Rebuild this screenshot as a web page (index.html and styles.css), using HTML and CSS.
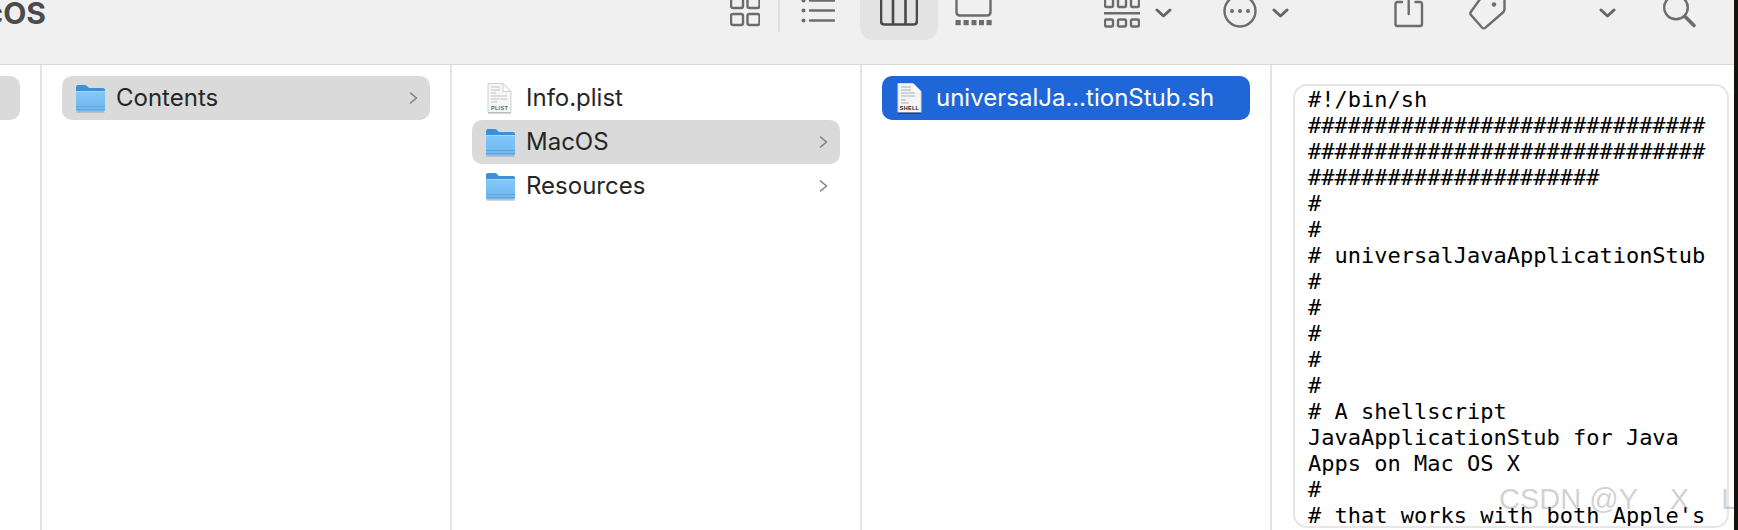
FILE: index.html
```html
<!DOCTYPE html>
<html lang="en">
<head>
<meta charset="utf-8">
<title>MacOS</title>
<link rel="stylesheet" href="styles.css">
</head>
<body>
<svg class="defs" width="0" height="0" aria-hidden="true">
  <defs>
    <linearGradient id="fb" x1="0" y1="0" x2="0" y2="1"><stop offset="0" stop-color="#84c8f8"/><stop offset="1" stop-color="#6db6ee"/></linearGradient>
    <symbol id="folder" viewBox="0 0 29 28">
      <path d="M0 6V2q0-2 2-2h7q1.500 0 2.500 1.500L13 3h14q2 0 2 2v5H0z" fill="#3d8fd8"/>
      <rect x="0" y="6" width="29" height="20.500" rx="1.500" fill="url(#fb)"/>
      <rect x="0" y="6" width="29" height="1" fill="#a4d8fb"/>
      <rect x="0" y="21" width="29" height="1" fill="#5ea6de"/>
      <rect x="0" y="24" width="29" height="1" fill="#5ea6de"/>
      <rect x="0.500" y="26.500" width="28" height="1.200" fill="#9a9a9a" opacity=".6"/>
    </symbol>
    <symbol id="chev" viewBox="0 0 9 12">
      <path d="M1.500 1l6 5-6 5" fill="none" stroke="#7c7c7c" stroke-width="1.500" stroke-linecap="round" stroke-linejoin="round"/>
    </symbol>
    <symbol id="drop" viewBox="0 0 17 10">
      <path d="M2 2l6.500 6L15 2" fill="none" stroke="#666" stroke-width="3" stroke-linecap="round" stroke-linejoin="round"/>
    </symbol>
  </defs>
</svg>
<div class="screen">
  <div class="window">
    <header class="toolbar">
      <div class="title"><span>MacOS</span></div>
      <svg class="tool t-grid" width="30" height="40" viewBox="0 0 30 40"><g class="ico"><rect x="1" y="-4" width="12" height="12" rx="2"/><rect x="17.500" y="-4" width="12" height="12" rx="2"/><rect x="1" y="14" width="12" height="11" rx="2"/><rect x="17.500" y="14" width="12" height="11" rx="2"/></g></svg>
      <div class="tool-sep"></div>
      <svg class="tool t-list" width="34" height="40" viewBox="0 0 34 40"><g class="ico"><path d="M9 .5h24M9 10.500h24M9 20.500h24" stroke-linecap="round"/></g><circle cx="2.500" cy=".5" r="2" class="dot"/><circle cx="2.500" cy="10.500" r="2" class="dot"/><circle cx="2.500" cy="20.500" r="2" class="dot"/></svg>
      <div class="pressed">
        <svg width="38" height="40" viewBox="0 0 38 40"><g class="ico dark"><path d="M1 -4V21q0 3.500 3.500 3.500h29q3.500 0 3.500-3.500V-4M13 -4V24.500M25.500 -4V24.500"/></g></svg>
      </div>
      <svg class="tool t-gallery" width="38" height="40" viewBox="0 0 38 40"><g class="ico"><path d="M1.500 -4V12q0 3.500 3.500 3.500h27q3.500 0 3.500-3.500V-4"/></g><g class="dot"><rect x="0.500" y="20" width="5.200" height="5.200"/><rect x="8.500" y="20" width="5.200" height="5.200"/><rect x="16.500" y="20" width="5" height="5.200"/><rect x="24" y="20" width="5" height="5.200"/><rect x="31.500" y="20" width="5.200" height="5.200"/></g></svg>
      <svg class="tool t-group" width="36" height="40" viewBox="0 0 36 40"><g class="ico"><path d="M0 13.300h36"/><rect x="1" y="-3" width="8" height="10" rx="1.500"/><rect x="14" y="-3" width="8" height="10" rx="1.500"/><rect x="27" y="-3" width="8" height="10" rx="1.500"/><rect x="1" y="19.500" width="8" height="7" rx="1.500"/><rect x="14" y="19.500" width="8" height="7" rx="1.500"/><rect x="27" y="19.500" width="8" height="7" rx="1.500"/></g></svg>
      <svg class="drop d1" width="17" height="10"><use href="#drop"/></svg>
      <svg class="tool t-more" width="34" height="40" viewBox="0 0 34 40"><circle class="ico" cx="17" cy="11" r="15.500"/><circle class="dot" cx="9" cy="11" r="2"/><circle class="dot" cx="17" cy="11" r="2"/><circle class="dot" cx="25" cy="11" r="2"/></svg>
      <svg class="drop d2" width="17" height="10"><use href="#drop"/></svg>
      <svg class="tool t-share" width="30" height="40" viewBox="0 0 30 40"><g class="ico"><path d="M8 2H3.500Q1.500 2 1.500 4V24q0 2 2 2H26q2 0 2-2V4q0-2-2-2H21.500M14.700 -4V14" stroke-linecap="round"/></g></svg>
      <svg class="tool t-tag" width="38" height="40" viewBox="0 0 38 40"><g class="ico"><path d="M14 -5L1.800 12q-1.100 1.500 .2 3L13 27.500q1.800 1.800 3.500 0L34.500 12q1-1 1-3V-5"/></g><circle class="dot" cx="25" cy="4.500" r="2.200"/></svg>
      <svg class="drop d3" width="17" height="10"><use href="#drop"/></svg>
      <svg class="tool t-search" width="34" height="40" viewBox="0 0 34 40"><g class="ico"><circle cx="13" cy="7.500" r="11.800"/><path class="handle" d="M22.500 17L31 25.500" stroke-linecap="round"/></g></svg>
    </header>
    <main class="browser">
      <section class="col col-first"><div class="row row-gray row-stub"></div></section>
      <section class="col">
        <div class="row row-gray">
          <svg class="folder" width="29" height="28"><use href="#folder"/></svg>
          <span class="name">Contents</span>
          <svg class="chev" width="9" height="12"><use href="#chev"/></svg>
        </div>
      </section>
      <section class="col">
        <div class="row">
          <svg class="doc" width="29" height="31" viewBox="0 0 29 31"><path d="M3 0.500H18L26 8.500V29.500H3z" fill="#f6f6f6" stroke="#d0d0d0"/><path d="M18 .5V8.500H26z" fill="#fff" stroke="#cfcfcf"/><path d="M6 4h9M6 7h9M6 10h5M6 13h8M14 13h8M6 16h8M15 16h7M6 19h6" stroke="#c4c4c4" stroke-width="1.200"/><text class="doc-label" x="14.500" y="27">PLIST</text><rect x="3" y="29.500" width="23" height="1" fill="#aaa"/></svg>
          <span class="name">Info.plist</span>
        </div>
        <div class="row row-gray">
          <svg class="folder" width="29" height="28"><use href="#folder"/></svg>
          <span class="name">MacOS</span>
          <svg class="chev" width="9" height="12"><use href="#chev"/></svg>
        </div>
        <div class="row">
          <svg class="folder" width="29" height="28"><use href="#folder"/></svg>
          <span class="name">Resources</span>
          <svg class="chev" width="9" height="12"><use href="#chev"/></svg>
        </div>
      </section>
      <section class="col">
        <div class="row row-blue">
          <svg class="doc" width="29" height="31" viewBox="0 0 29 31"><path d="M3 0.500H18L26 8.500V29.500H3z" fill="#f4f4f4" stroke="#d8d8d8"/><path d="M18 .5V8.500H26z" fill="#fff"/><path d="M6 4h10M6 7h10M6 10h14M6 13h14M6 17h5M6 20h8" stroke="#c6c6c6" stroke-width="1.400"/><text class="doc-label doc-dark" x="14.500" y="27">SHELL</text><rect x="3" y="29.500" width="23" height="1.200" fill="#16397a"/></svg>
          <span class="name">universalJa…tionStub.sh</span>
        </div>
      </section>
      <section class="pane">
        <pre class="source">#!/bin/sh
##################################################################################
#
#
# universalJavaApplicationStub
#
#
#
#
#
# A shellscript JavaApplicationStub for Java Apps on Mac OS X
#
# that works with both Apple's</pre>
      </section>
    </main>
    <div class="watermark">CSDN @Y    X    L</div>
  </div>
  <div class="edge"></div>
</div>
</body>
</html>
```
FILE: styles.css
```css
* { box-sizing: border-box; }
html, body { margin: 0; height: 100%; overflow: hidden; background: #fff; }
.defs { position: absolute; }
.screen { display: flex; width: 1738px; height: 530px; }
.window { position: relative; width: 1734px; height: 530px; overflow: hidden; display: flex; flex-direction: column; }
.edge { flex: 1; background: #131210; }

.toolbar { display: flex; align-items: flex-start; flex: none; height: 65px; background: #f0f0f0; border-bottom: 1.500px solid #d9d9d9; }
.title { width: 46px; height: 40px; overflow: hidden; display: flex; justify-content: flex-end; flex: none; }
.title span { font: 700 30px/1 "Inter", "Liberation Sans", sans-serif; color: #4b4b4b; margin-top: -2px; flex: none; }
.tool, .drop { flex: none; display: block; }
.ico { fill: none; stroke: #6c6c6c; stroke-width: 2.400; }
.ico.dark { stroke: #4a4a4a; stroke-width: 2.600; }
.handle { stroke-width: 3.600; }
.dot { fill: #6c6c6c; }
.tool-sep { flex: none; width: 1.500px; height: 32px; background: #dedede; margin-left: 18px; }
.t-grid { margin-left: 684px; }
.t-list { margin-left: 21px; }
.pressed { flex: none; width: 78px; height: 40px; margin-left: 25px; background: #e3e3e3; border-radius: 0 0 13px 13px; padding-left: 20px; }
.pressed svg { display: block; }
.t-gallery { margin-left: 17px; }
.t-group { margin-left: 111px; }
.drop { margin-top: 8px; }
.d1 { margin-left: 15px; }
.t-more { margin-left: 51px; }
.d2 { margin-left: 15px; }
.t-share { margin-left: 105px; }
.t-tag { margin-left: 45px; }
.d3 { margin-left: 92px; }
.t-search { margin-left: 47px; }

.browser { display: flex; flex: 1; min-height: 0; background: #fff; }
.col { flex: none; width: 410px; padding: 11px 20px 0; border-right: 2px solid #e4e4e4; }
.col-first { width: 42px; padding: 11px 20px 0 0; }
.row { display: flex; align-items: center; height: 44px; padding: 0 12px 0 14px; border-radius: 10px; }
.row-stub { border-radius: 0 10px 10px 0; padding: 0; }
.row-gray { background: #dadada; }
.row-blue { background: #1f66d9; color: #fff; }
.folder { flex: none; display: block; margin-top: 1px; }
.doc { flex: none; display: block; margin-left: -1px; margin-right: 1px; margin-top: 1px; }
.doc-label { font: 700 5.500px "Liberation Sans", sans-serif; text-anchor: middle; fill: #666; letter-spacing: .3px; }
.doc-dark { fill: #222; }
.name { flex: 1; margin-left: 11px; font: 400 24px/1 "Inter", "Liberation Sans", sans-serif; color: #262626; white-space: nowrap; }
.row-blue .name { color: #fff; }
.chev { flex: none; display: block; }

.pane { flex: 1; padding: 19px 5px 0 21px; min-width: 0; }
.source { margin: 0; height: 444px; overflow: hidden; border: 2px solid #e6e6e6; border-radius: 14px; padding: 1px 18px 0 13px; font: 400 22px/26px "DejaVu Sans Mono", "Liberation Mono", monospace; color: #000; white-space: pre-wrap; overflow-wrap: anywhere; }

.watermark { position: absolute; left: 1499px; top: 483px; font: 400 29px/32px "Liberation Sans", sans-serif; color: rgba(125,125,125,.36); white-space: pre; }
```
